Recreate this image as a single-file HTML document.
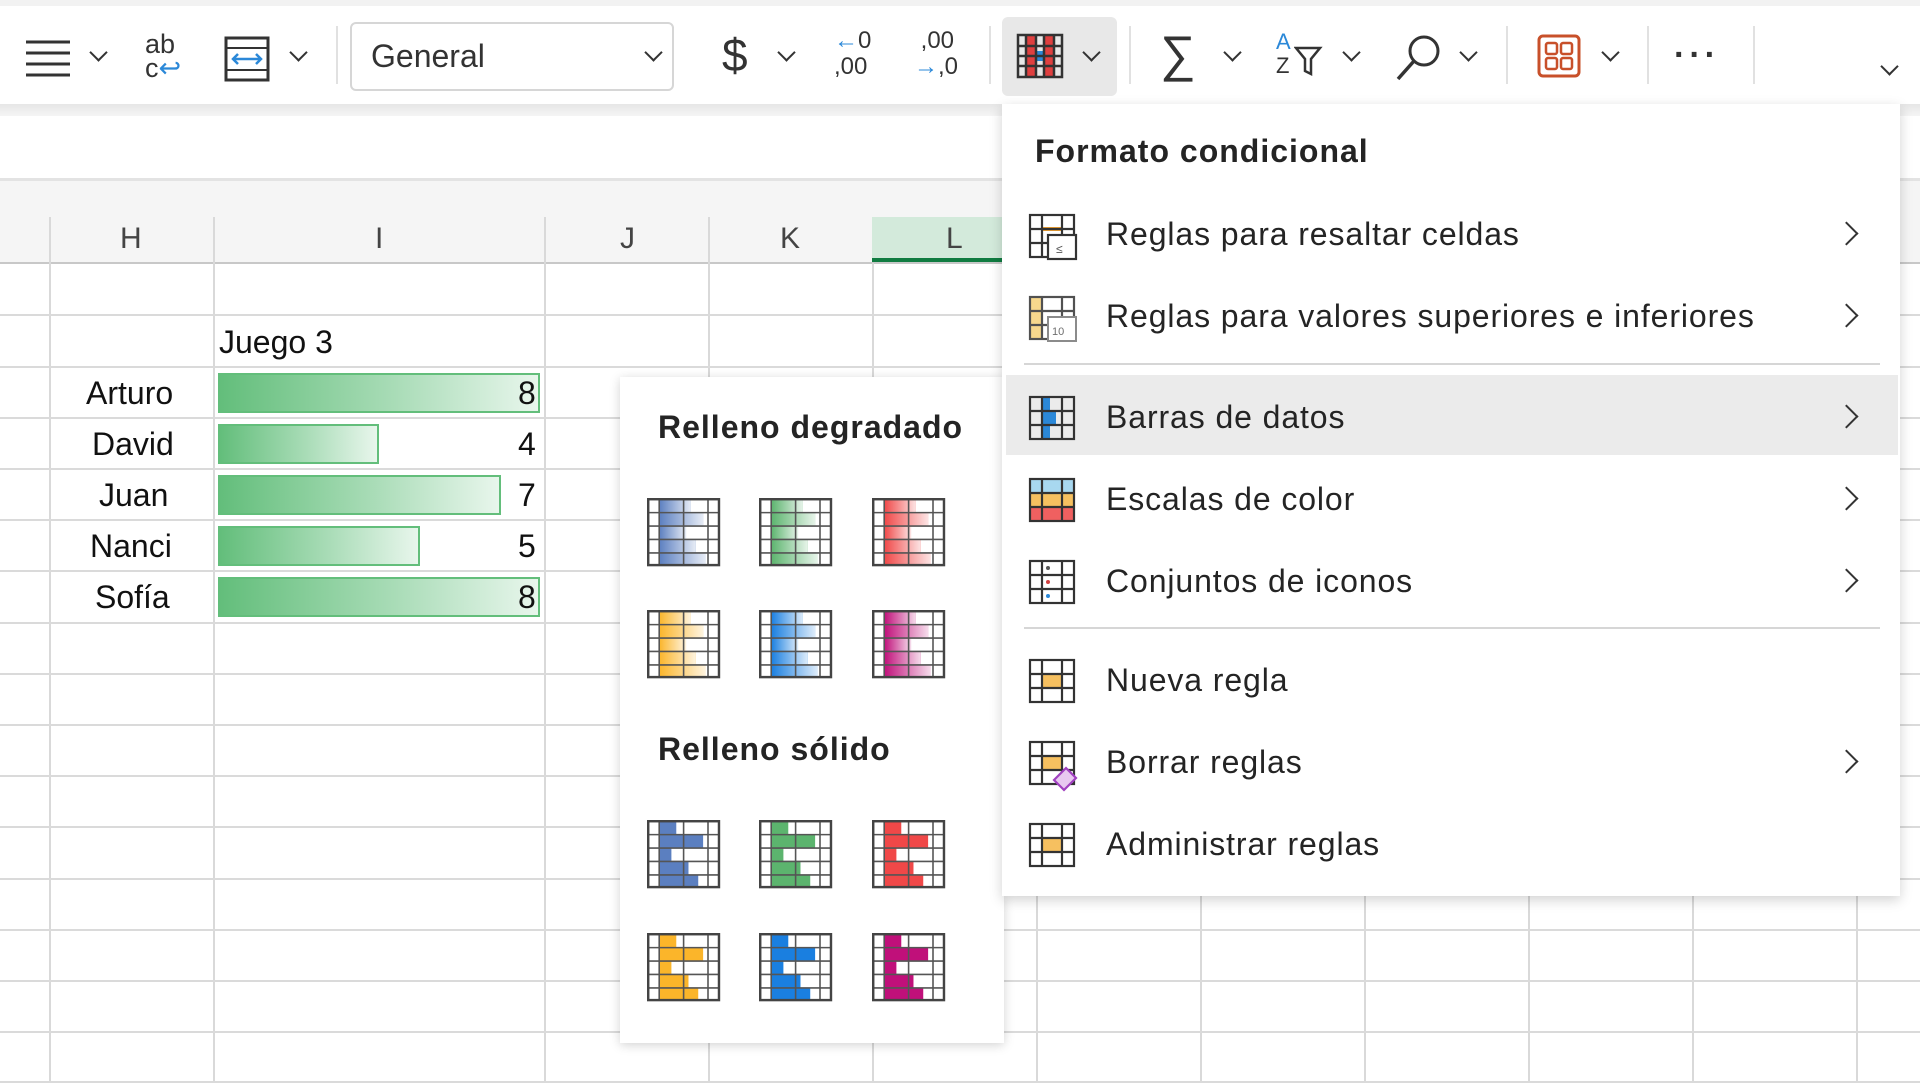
<!DOCTYPE html>
<html><head><meta charset="utf-8">
<style>
*{margin:0;padding:0;box-sizing:border-box}
html,body{width:1920px;height:1083px;overflow:hidden}
body{background:#fff;font-family:"Liberation Sans",sans-serif;position:relative;color:#242424}
.abs{position:absolute}
.chev{position:absolute;width:13px;height:13px;border-right:2px solid #333;border-bottom:2px solid #333;transform:rotate(45deg)}
.sep{position:absolute;width:2px;background:#e1e1e1;top:26px;height:58px}
.vl{position:absolute;top:217px;bottom:0;width:2px;background:#d9d9d9}
.hl{position:absolute;left:0;right:0;height:2px;background:#dadada}
.cell{position:absolute;font-family:"Liberation Sans Narrow","Liberation Sans",sans-serif;font-size:32px;color:#111}
.bar{position:absolute;left:218px;height:40px;border:2px solid #63be7b;background:linear-gradient(90deg,#63be7b 0%,#a9dcb7 55%,#e8f6ec 100%)}
.mi{position:absolute;left:1106px;font-size:32px;letter-spacing:0.9px;color:#242424;font-family:"Liberation Sans",sans-serif}
.mchev{position:absolute;left:1838px;width:17px;height:17px;border-right:2.5px solid #333;border-top:2.5px solid #333;transform:rotate(45deg)}
.hd{position:absolute;top:222px;font-size:30px;color:#444;font-family:"Liberation Sans Narrow","Liberation Sans",sans-serif}
.ttl{position:absolute;font-size:32px;font-weight:bold;letter-spacing:1px;color:#242424}
</style></head><body>

<div class="abs" style="left:0;top:0;width:1920px;height:6px;background:#f2f2f2"></div>
<div class="abs" style="left:0;top:104px;width:1920px;height:12px;background:linear-gradient(#e6e6e6,#f5f5f5)"></div>
<div class="abs" style="left:0;top:178px;width:1920px;height:3px;background:#e3e3e3"></div>

<svg class="abs" style="left:24px;top:38px" width="48" height="42"><g stroke="#333" stroke-width="3"><line x1="2" y1="4" x2="46" y2="4"/><line x1="2" y1="15" x2="46" y2="15"/><line x1="2" y1="26" x2="46" y2="26"/><line x1="2" y1="37" x2="46" y2="37"/></g></svg>
<div class="chev" style="left:92px;top:46px"></div>
<div class="abs" style="left:145px;top:32px;font-size:27px;line-height:24px;color:#333">ab<br>c<span style="color:#2b88d8">↩</span></div>
<svg class="abs" style="left:224px;top:36px" width="46" height="46"><rect x="2" y="2" width="42" height="42" fill="none" stroke="#333" stroke-width="3"/><line x1="2" y1="12" x2="44" y2="12" stroke="#333" stroke-width="2"/><line x1="2" y1="34" x2="44" y2="34" stroke="#333" stroke-width="2"/><path d="M10 23h26M14 18l-5 5 5 5M32 18l5 5-5 5" stroke="#2b88d8" stroke-width="2.5" fill="none"/></svg>
<div class="chev" style="left:292px;top:46px"></div>
<div class="sep" style="left:336px"></div>
<div class="abs" style="left:350px;top:22px;width:324px;height:69px;border:2px solid #d6d6d6;border-radius:6px"></div>
<div class="abs" style="left:371px;top:38px;font-size:32px;color:#333;font-family:'Liberation Sans Narrow','Liberation Sans',sans-serif">General</div>
<div class="chev" style="left:647px;top:46px"></div>
<div class="abs" style="left:722px;top:28px;font-size:46px;color:#333">$</div>
<div class="chev" style="left:780px;top:46px"></div>
<div class="abs" style="left:834px;top:28px;font-size:24px;line-height:26px;color:#333"><span style="color:#2b88d8">←</span>0<br>,00</div>
<div class="abs" style="left:914px;top:28px;font-size:24px;line-height:26px;color:#333">&nbsp;,00<br><span style="color:#2b88d8">→</span>,0</div>
<div class="sep" style="left:989px"></div>
<div class="abs" style="left:1002px;top:17px;width:115px;height:79px;background:#e8e8e8;border-radius:6px"></div>
<svg class="abs" style="left:1016px;top:33px" width="48" height="46"><rect x="10" y="3" width="10" height="40" fill="#e04040"/><rect x="28" y="3" width="10" height="40" fill="#e04040"/><rect x="20" y="18" width="8" height="10" fill="#2b88d8"/><g stroke="#333" stroke-width="2.5" fill="none"><rect x="2" y="2" width="44" height="42"/><line x1="10" y1="2" x2="10" y2="44"/><line x1="20" y1="2" x2="20" y2="44"/><line x1="28" y1="2" x2="28" y2="44"/><line x1="38" y1="2" x2="38" y2="44"/><line x1="2" y1="13" x2="46" y2="13"/><line x1="2" y1="23" x2="46" y2="23"/><line x1="2" y1="33" x2="46" y2="33"/></g></svg>
<div class="chev" style="left:1085px;top:46px"></div>
<div class="sep" style="left:1129px"></div>
<div class="abs" style="left:1160px;top:25px;font-size:50px;color:#333">∑</div>
<div class="chev" style="left:1226px;top:46px"></div>
<div class="abs" style="left:1276px;top:30px;font-size:22px;line-height:24px;color:#333"><span style="color:#2b88d8">A</span><br>Z</div>
<svg class="abs" style="left:1294px;top:44px" width="30" height="34"><path d="M2 4h24l-9 11v15l-6-3V15z" fill="none" stroke="#333" stroke-width="2.5"/></svg>
<div class="chev" style="left:1345px;top:46px"></div>
<svg class="abs" style="left:1394px;top:32px" width="50" height="50"><circle cx="30" cy="19" r="14" fill="none" stroke="#333" stroke-width="3"/><line x1="20" y1="29" x2="4" y2="47" stroke="#333" stroke-width="3.5"/></svg>
<div class="chev" style="left:1462px;top:46px"></div>
<div class="sep" style="left:1506px"></div>
<svg class="abs" style="left:1537px;top:34px" width="44" height="44"><rect x="2" y="2" width="40" height="40" rx="4" fill="none" stroke="#c8502a" stroke-width="3"/><rect x="9" y="9" width="11" height="11" rx="2" fill="none" stroke="#c8502a" stroke-width="2.5"/><rect x="24" y="9" width="11" height="11" rx="2" fill="none" stroke="#c8502a" stroke-width="2.5"/><rect x="9" y="24" width="11" height="11" rx="2" fill="none" stroke="#c8502a" stroke-width="2.5"/><rect x="24" y="24" width="11" height="11" rx="2" fill="none" stroke="#c8502a" stroke-width="2.5"/></svg>
<div class="chev" style="left:1604px;top:46px"></div>
<div class="sep" style="left:1647px"></div>
<div class="abs" style="left:1674px;top:36px;font-size:34px;letter-spacing:4px;color:#333;font-weight:bold">···</div>
<div class="sep" style="left:1753px"></div>
<div class="chev" style="left:1883px;top:60px"></div>

<div class="abs" style="left:0;top:181px;width:1920px;height:82px;background:#f5f5f5"></div>
<div class="abs" style="left:872px;top:217px;width:164px;height:46px;background:#d3eadb"></div>
<div class="abs" style="left:872px;top:258px;width:164px;height:5px;background:#107c41"></div>
<div class="hl" style="top:262px;background:#c8c8c8"></div>
<div class="hd" style="left:120px">H</div>
<div class="hd" style="left:375px">I</div>
<div class="hd" style="left:620px">J</div>
<div class="hd" style="left:780px">K</div>
<div class="hd" style="left:946px">L</div>

<div class="vl" style="left:49px"></div><div class="vl" style="left:213px"></div><div class="vl" style="left:544px"></div><div class="vl" style="left:708px"></div><div class="vl" style="left:872px;top:263px"></div><div class="vl" style="left:1036px"></div><div class="vl" style="left:1200px"></div><div class="vl" style="left:1364px"></div><div class="vl" style="left:1528px"></div><div class="vl" style="left:1692px"></div><div class="vl" style="left:1856px"></div>
<div class="hl" style="top:314px"></div><div class="hl" style="top:366px"></div><div class="hl" style="top:417px"></div><div class="hl" style="top:468px"></div><div class="hl" style="top:519px"></div><div class="hl" style="top:570px"></div><div class="hl" style="top:622px"></div><div class="hl" style="top:673px"></div><div class="hl" style="top:724px"></div><div class="hl" style="top:775px"></div><div class="hl" style="top:826px"></div><div class="hl" style="top:878px"></div><div class="hl" style="top:929px"></div><div class="hl" style="top:980px"></div><div class="hl" style="top:1031px"></div><div class="hl" style="top:1081px"></div>

<div class="cell" style="left:219px;top:324px">Juego 3</div>
<div class="bar" style="top:373px;width:322px"></div>
<div class="bar" style="top:424px;width:161px"></div>
<div class="bar" style="top:475px;width:283px"></div>
<div class="bar" style="top:526px;width:202px"></div>
<div class="bar" style="top:577px;width:322px"></div>
<div class="cell" style="left:86px;top:375px">Arturo</div>
<div class="cell" style="left:92px;top:426px">David</div>
<div class="cell" style="left:99px;top:477px">Juan</div>
<div class="cell" style="left:90px;top:528px">Nanci</div>
<div class="cell" style="left:95px;top:579px">Sofía</div>
<div class="cell" style="left:518px;top:375px">8</div>
<div class="cell" style="left:518px;top:426px">4</div>
<div class="cell" style="left:518px;top:477px">7</div>
<div class="cell" style="left:518px;top:528px">5</div>
<div class="cell" style="left:518px;top:579px">8</div>

<div class="abs" style="left:620px;top:377px;width:384px;height:666px;background:#fff;box-shadow:0 2px 10px rgba(0,0,0,0.18)"></div>
<div class="ttl" style="left:658px;top:409px">Relleno degradado</div>
<div class="ttl" style="left:658px;top:731px">Relleno sólido</div>

<svg class="abs" style="left:620px;top:377px" width="384" height="666">
<defs>
<linearGradient id="wg" x1="0" x2="1" y1="0" y2="0"><stop offset="0" stop-color="#fff" stop-opacity="0"/><stop offset="1" stop-color="#fff" stop-opacity="0.85"/></linearGradient>
<g id="grid"><rect x="1" y="1" width="58" height="54" fill="#fff"/></g>
<g id="lines"><g stroke="#555" stroke-width="1.3" fill="none">
<line x1="10" y1="1" x2="10" y2="55"/><line x1="50" y1="1" x2="50" y2="55"/><line x1="30" y1="1" x2="30" y2="55"/>
<line x1="1" y1="12" x2="59" y2="12"/><line x1="1" y1="23" x2="59" y2="23"/><line x1="1" y1="34" x2="59" y2="34"/><line x1="1" y1="45" x2="59" y2="45"/>
</g><rect x="1" y="1" width="58" height="54" fill="none" stroke="#444" stroke-width="2"/></g>
<g id="gb"><rect x="10" y="1" width="26" height="11"/><rect x="10" y="12" width="36" height="11"/><rect x="10" y="23" width="22" height="11"/><rect x="10" y="34" width="30" height="11"/><rect x="10" y="45" width="38" height="10"/></g>
<g id="gw"><rect x="10" y="1" width="26" height="11" fill="url(#wg)"/><rect x="10" y="12" width="36" height="11" fill="url(#wg)"/><rect x="10" y="23" width="22" height="11" fill="url(#wg)"/><rect x="10" y="34" width="30" height="11" fill="url(#wg)"/><rect x="10" y="45" width="38" height="10" fill="url(#wg)"/></g>
<g id="sb"><rect x="10" y="1" width="14" height="11"/><rect x="10" y="12" width="36" height="11"/><rect x="10" y="23" width="10" height="11"/><rect x="10" y="34" width="24" height="11"/><rect x="10" y="45" width="32" height="10"/></g>
</defs>
<g transform="translate(27,121) scale(1.22)"><use href="#grid"/><g fill="#5b7fc0"><use href="#gb"/></g><use href="#gw"/><use href="#lines"/></g>
<g transform="translate(139,121) scale(1.22)"><use href="#grid"/><g fill="#5cb46e"><use href="#gb"/></g><use href="#gw"/><use href="#lines"/></g>
<g transform="translate(252,121) scale(1.22)"><use href="#grid"/><g fill="#f04848"><use href="#gb"/></g><use href="#gw"/><use href="#lines"/></g>
<g transform="translate(27,233) scale(1.22)"><use href="#grid"/><g fill="#fbb52a"><use href="#gb"/></g><use href="#gw"/><use href="#lines"/></g>
<g transform="translate(139,233) scale(1.22)"><use href="#grid"/><g fill="#1a7fe0"><use href="#gb"/></g><use href="#gw"/><use href="#lines"/></g>
<g transform="translate(252,233) scale(1.22)"><use href="#grid"/><g fill="#c0107a"><use href="#gb"/></g><use href="#gw"/><use href="#lines"/></g>
<g transform="translate(27,443) scale(1.22)"><use href="#grid"/><g fill="#5b7fc0"><use href="#sb"/></g><use href="#lines"/></g>
<g transform="translate(139,443) scale(1.22)"><use href="#grid"/><g fill="#5cb46e"><use href="#sb"/></g><use href="#lines"/></g>
<g transform="translate(252,443) scale(1.22)"><use href="#grid"/><g fill="#f04848"><use href="#sb"/></g><use href="#lines"/></g>
<g transform="translate(27,556) scale(1.22)"><use href="#grid"/><g fill="#fbb52a"><use href="#sb"/></g><use href="#lines"/></g>
<g transform="translate(139,556) scale(1.22)"><use href="#grid"/><g fill="#1a7fe0"><use href="#sb"/></g><use href="#lines"/></g>
<g transform="translate(252,556) scale(1.22)"><use href="#grid"/><g fill="#c0107a"><use href="#sb"/></g><use href="#lines"/></g>
</svg>

<div class="abs" style="left:1002px;top:104px;width:898px;height:792px;background:#fff;box-shadow:0 4px 12px rgba(0,0,0,0.18)"></div>
<div class="ttl" style="left:1035px;top:133px">Formato condicional</div>
<div class="abs" style="left:1006px;top:375px;width:892px;height:80px;background:#ebebeb"></div>
<div class="abs" style="left:1024px;top:363px;width:856px;height:2px;background:#d6d6d6"></div>
<div class="abs" style="left:1024px;top:627px;width:856px;height:2px;background:#d6d6d6"></div>

<svg class="abs" style="left:1028px;top:210px" width="56" height="660">
<defs><g id="mg" stroke="#333" stroke-width="2.2" fill="none"><rect x="2" y="2" width="44" height="42"/><line x1="14" y1="2" x2="14" y2="44"/><line x1="34" y1="2" x2="34" y2="44"/><line x1="2" y1="16" x2="46" y2="16"/><line x1="2" y1="30" x2="46" y2="30"/></g></defs>
<g transform="translate(0,3)"><rect x="14" y="14" width="20" height="4" fill="#f0a030"/><use href="#mg"/><rect x="20" y="22" width="28" height="24" fill="#fff" stroke="#333" stroke-width="2.2"/><text x="28" y="40" font-size="12" fill="#555">≤</text></g>
<g transform="translate(0,85)" opacity="0.85"><rect x="2" y="2" width="12" height="42" fill="#f6d27a"/><use href="#mg"/><rect x="20" y="22" width="28" height="24" fill="#fff" stroke="#777" stroke-width="2"/><text x="24" y="40" font-size="11" fill="#555">10</text></g>
<g transform="translate(0,185)"><rect x="14" y="2" width="8" height="42" fill="#2b88d8"/><rect x="14" y="16" width="14" height="14" fill="#2b88d8"/><use href="#mg"/></g>
<g transform="translate(0,267)"><rect x="2" y="2" width="44" height="14" fill="#a8d8f0"/><rect x="2" y="16" width="44" height="14" fill="#f6c060"/><rect x="2" y="30" width="44" height="14" fill="#f06060"/><use href="#mg"/></g>
<g transform="translate(0,349)"><use href="#mg"/><g fill="#555"><circle cx="20" cy="9" r="2"/><circle cx="20" cy="23" r="2" fill="#d04040"/><circle cx="20" cy="37" r="2" fill="#2b88d8"/></g></g>
<g transform="translate(0,448)"><rect x="14" y="16" width="20" height="14" fill="#f6c060"/><use href="#mg"/></g>
<g transform="translate(0,530)"><rect x="14" y="16" width="20" height="14" fill="#f6c060"/><use href="#mg"/><path d="M26 40l12-12 10 10-12 12z" fill="#e8c8f0" stroke="#a040c0" stroke-width="2.2"/></g>
<g transform="translate(0,612)"><rect x="14" y="16" width="20" height="14" fill="#f6c060"/><use href="#mg"/></g>
</svg>

<div class="mi" style="top:216px">Reglas para resaltar celdas</div>
<div class="mi" style="top:298px">Reglas para valores superiores e inferiores</div>
<div class="mi" style="top:399px">Barras de datos</div>
<div class="mi" style="top:481px">Escalas de color</div>
<div class="mi" style="top:563px">Conjuntos de iconos</div>
<div class="mi" style="top:662px">Nueva regla</div>
<div class="mi" style="top:744px">Borrar reglas</div>
<div class="mi" style="top:826px">Administrar reglas</div>
<div class="mchev" style="top:225px"></div>
<div class="mchev" style="top:307px"></div>
<div class="mchev" style="top:408px"></div>
<div class="mchev" style="top:490px"></div>
<div class="mchev" style="top:572px"></div>
<div class="mchev" style="top:753px"></div>
</body></html>
